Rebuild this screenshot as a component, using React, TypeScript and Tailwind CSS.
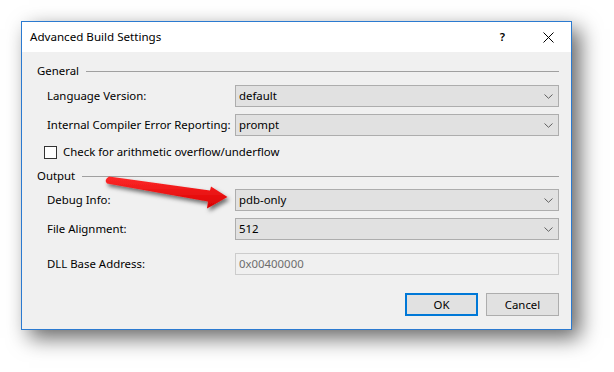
import { useState } from "react";

const font = { fontFamily: '"Segoe UI", "Noto Sans", Arial, sans-serif' };

function Chevron() {
  return (
    <svg width="9" height="5" viewBox="0 0 9 5" className="shrink-0">
      <path d="M0.5 0.5 L4.5 4.3 L8.5 0.5" fill="none" stroke="#606060" strokeWidth="1" />
    </svg>
  );
}

function Select({ value }: { value: string }) {
  return (
    <div className="flex h-[22px] w-[324px] items-center justify-between border border-[#adadad] bg-[#e1e1e1] pl-[3px] pr-[5px]">
      <span>{value}</span>
      <Chevron />
    </div>
  );
}

function GroupHeader({ title }: { title: string }) {
  return (
    <div className="flex h-4 items-center gap-[7px]">
      <span>{title}</span>
      <div className="h-px flex-1 bg-[#a0a0a0]" />
    </div>
  );
}

function Row({ label, children }: { label: string; children: React.ReactNode }) {
  return (
    <div className="flex items-center pl-[10px]">
      <span className="w-[188px] whitespace-nowrap">{label}</span>
      {children}
    </div>
  );
}

export default function App() {
  const [checked, setChecked] = useState(false);

  return (
    <div
      className="h-[372px] w-[614px] bg-white pl-[21px] pt-[21px] text-[11.4px] leading-[16px] text-black"
      style={font}
    >
      <div className="relative flex h-[309px] w-[551px] flex-col border border-[#2b7ad0] bg-[#f0f0f0] shadow-[8px_8px_20px_rgba(0,0,0,0.6)]">
        <div className="flex h-[30px] shrink-0 items-center bg-white pl-[8px]">
          <span className="flex-1 text-[11.6px]">Advanced Build Settings</span>
          <span className="mr-[38px] font-semibold">?</span>
          <svg width="11" height="11" viewBox="0 0 11 11" className="mr-[17px]">
            <path d="M0.5 0.5 L10.5 10.5 M10.5 0.5 L0.5 10.5" stroke="#000" strokeWidth="1" />
          </svg>
        </div>

        <div className="flex flex-col pl-[15px] pr-[12px]">
          <div className="mt-[11px]">
            <GroupHeader title="General" />
          </div>
          <div className="mt-[6px]">
            <Row label="Language Version:">
              <Select value="default" />
            </Row>
          </div>
          <div className="mt-[7px]">
            <Row label="Internal Compiler Error Reporting:">
              <Select value="prompt" />
            </Row>
          </div>
          <label className="mt-[7px] flex h-[18px] items-center gap-[6px] pl-[7px]">
            <span
              onClick={() => setChecked(!checked)}
              className="flex h-[13px] w-[13px] items-center justify-center border border-[#333] bg-white"
            >
              {checked && <span className="text-[10px] leading-none">✓</span>}
            </span>
            <span className="whitespace-nowrap">Check for arithmetic overflow/underflow</span>
          </label>
          <div className="mt-[7px]">
            <GroupHeader title="Output" />
          </div>
          <div className="mt-[5px]">
            <Row label="Debug Info:">
              <Select value="pdb-only" />
            </Row>
          </div>
          <div className="mt-[7px]">
            <Row label="File Alignment:">
              <Select value="512" />
            </Row>
          </div>
          <div className="mt-[13px]">
            <Row label="DLL Base Address:">
              <div className="flex h-[22px] w-[324px] items-center border border-[#cccccc] bg-[#f0f0f0] pl-[3px] text-[#6d6d6d]">
                0x00400000
              </div>
            </Row>
          </div>
          <div className="mt-[18px] flex justify-end gap-[8px]">
            <button className="h-[23px] w-[73px] border-2 border-[#0078d7] bg-[#e1e1e1]">OK</button>
            <button className="h-[23px] w-[73px] border border-[#adadad] bg-[#e1e1e1]">Cancel</button>
          </div>
        </div>

        <svg
          className="pointer-events-none absolute left-[75px] top-[140px]"
          width="150"
          height="60"
          viewBox="0 0 150 60"
        >
          <defs>
            <filter id="sh" x="-20%" y="-40%" width="140%" height="180%">
              <feDropShadow dx="2" dy="3" stdDeviation="2" floodColor="#000" floodOpacity="0.55" />
            </filter>
            <linearGradient id="rg" x1="0" y1="0" x2="0" y2="1">
              <stop offset="0" stopColor="#ff2a2a" />
              <stop offset="1" stopColor="#d80000" />
            </linearGradient>
          </defs>
          <path
            d="M12 14.5 L113 28.5 L114 24.5 L130.5 35 L110 46.5 L111 39.5 L10 21.5 Q6.5 18 12 14.5 Z"
            fill="url(#rg)"
            filter="url(#sh)"
          />
        </svg>
      </div>
    </div>
  );
}
